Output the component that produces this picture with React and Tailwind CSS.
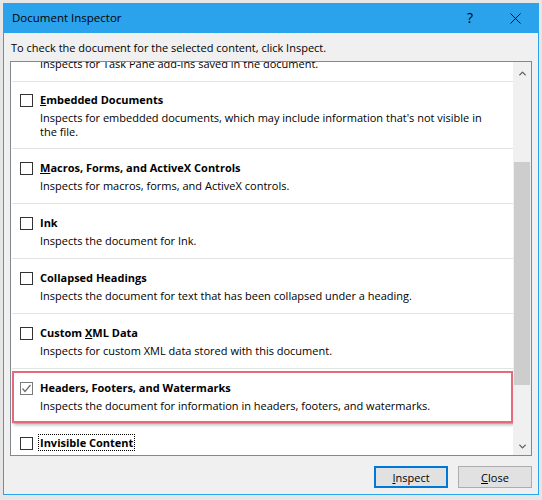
import { ChevronUp, ChevronDown } from "lucide-react";

const font = "font-['Open_Sans','Noto_Sans',sans-serif]";

const Checkbox = ({ checked }) => (
  <div
    className={`mt-[2px] w-[13px] h-[13px] shrink-0 border bg-white flex items-center justify-center ${
      checked ? "border-[#7a7a7a]" : "border-[#333333]"
    }`}
  >
    {checked && (
      <svg width="11" height="11" viewBox="0 0 11 11">
        <polyline points="1.5,5.5 4,8.5 9.5,2" fill="none" stroke="#6b6b6b" strokeWidth="1.2" />
      </svg>
    )}
  </div>
);

// one inspector option row, separator line below
const Row = ({ title, desc, checked, focused, highlight, tight }) => (
  <div className="relative">
    <div className={`flex gap-[7px] pl-[9px] ${tight ? "pt-[10px] pb-[9px]" : "pt-[11px] pb-[10px]"}`}>
      <Checkbox checked={checked} />
      <div>
        <div className="font-bold leading-[16px]">
          {focused ? (
            <span className="-ml-[2px] px-[1px] border border-dotted border-black">{title}</span>
          ) : (
            title
          )}
        </div>
        <div className="mt-[3px] leading-[14px]">{desc}</div>
      </div>
    </div>
    <div className="ml-[1px] h-px bg-[#e3e3e3]" />
    {highlight && (
      <div className="absolute top-[2px] left-[1px] right-0 bottom-[1px] border-2 border-[#e46b7b] shadow-[2px_2px_3px_rgba(0,0,0,0.28)] pointer-events-none" />
    )}
  </div>
);

export default function App() {
  return (
    <div className={`w-[542px] h-[500px] bg-[#e6e6e6] pt-[3px] pl-[3px] ${font} text-[11px] text-black`}>
      <div className="w-[536px] h-[492px] flex flex-col bg-[#f0f0f0] border-x border-b border-[#2aa2ec]">
        {/* title bar */}
        <div className="h-[30px] shrink-0 bg-[#2aa2ec] flex items-center pl-[8px] text-[11.5px]">
          <span>Document Inspector</span>
          <span className="ml-auto mr-[37px] text-[14px] leading-none">?</span>
          <svg className="mr-[17px]" width="11" height="11" viewBox="0 0 11 11">
            <path d="M0.5 0.5 L10.5 10.5 M10.5 0.5 L0.5 10.5" stroke="#000" strokeWidth="0.9" />
          </svg>
        </div>

        <div className="pl-[7px] mt-[7px] leading-[16px]">
          To check the document for the selected content, click Inspect.
        </div>

        {/* option list */}
        <div className="ml-[6px] mt-[5px] w-[522px] h-[395px] shrink-0 border border-[#828790] bg-white flex">
          <div className="flex-1 overflow-hidden">
            <div className="-mt-[35px]">
              <Row title="Task Pane Add-ins" desc="Inspects for Task Pane add-ins saved in the document." />
              <Row
                tight
                title={
                  <>
                    <u>E</u>mbedded Documents
                  </>
                }
                desc={
                  <>
                    Inspects for embedded documents, which may include information that's not visible in
                    <br />
                    the file.
                  </>
                }
              />
              <Row
                title={
                  <>
                    <u>M</u>acros, Forms, and ActiveX Controls
                  </>
                }
                desc="Inspects for macros, forms, and ActiveX controls."
              />
              <Row title="Ink" desc="Inspects the document for Ink." />
              <Row
                title="Collapsed Headings"
                desc="Inspects the document for text that has been collapsed under a heading."
              />
              <Row
                title={
                  <>
                    Custom <u>X</u>ML Data
                  </>
                }
                desc="Inspects for custom XML data stored with this document."
              />
              <Row
                checked
                highlight
                title="Headers, Footers, and Watermarks"
                desc="Inspects the document for information in headers, footers, and watermarks."
              />
              <Row
                focused
                title="Invisible Content"
                desc="Inspects the document for objects that are not visible because they have been formatted as invisible."
              />
            </div>
          </div>

          {/* scrollbar */}
          <div className="w-[18px] shrink-0 bg-[#f0f0f0] flex flex-col px-[1px]">
            <div className="h-[20px] flex items-end justify-center pb-[3px]">
              <ChevronUp className="w-[11px] h-[11px] text-[#606060]" strokeWidth={3} />
            </div>
            <div className="mt-[80px] h-[223px] bg-[#cdcdcd]" />
            <div className="flex-1" />
            <div className="h-[18px] flex items-center justify-center">
              <ChevronDown className="w-[11px] h-[11px] text-[#606060]" strokeWidth={3} />
            </div>
          </div>
        </div>

        {/* buttons */}
        <div className="mt-[10px] pr-[6px] flex justify-end gap-[10px]">
          <button className="w-[74px] h-[22px] bg-[#e1e1e1] border-2 border-[#0078d7] leading-none">
            <u>I</u>nspect
          </button>
          <button className="w-[74px] h-[22px] bg-[#e1e1e1] border border-[#adadad] leading-none">
            <u>C</u>lose
          </button>
        </div>
      </div>
    </div>
  );
}
